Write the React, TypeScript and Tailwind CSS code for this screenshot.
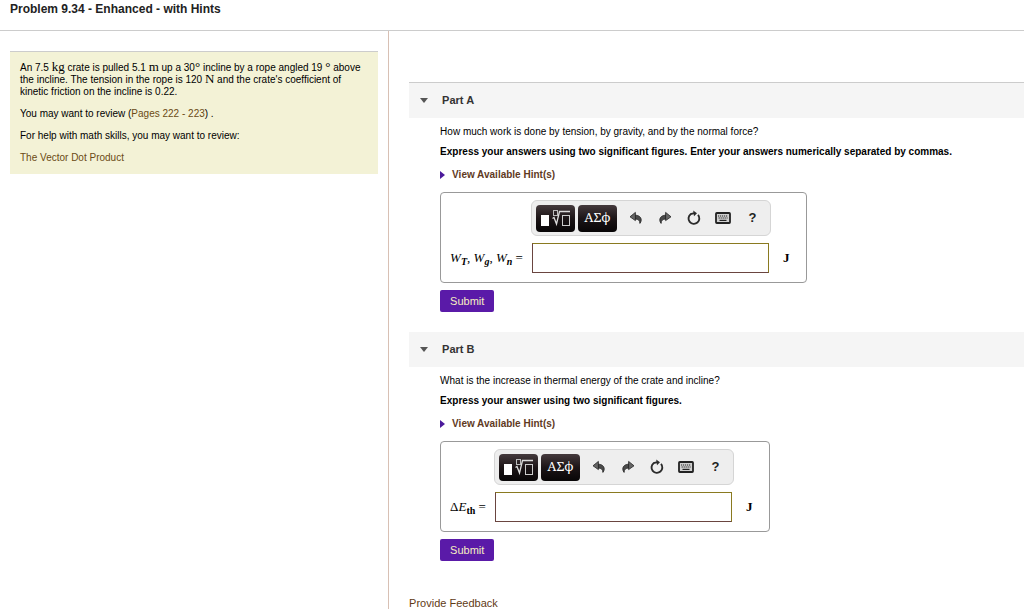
import type { ReactNode } from "react";

interface PartProps {
  id: string;
  title: string;
  bordered?: boolean;
  question: string;
  instructions: string;
  label: ReactNode;
}

function UndoIcon({ flipped = false }: { flipped?: boolean }) {
  return (
    <svg width="14" height="14" viewBox="0 0 14 14" aria-hidden="true">
      <g
        transform={flipped ? "translate(14 0) scale(-1 1)" : undefined}
        stroke="#222"
        strokeWidth="0.8"
        strokeLinejoin="round"
      >
        <path d="M6 4.2c3.9 0 6.2 2 6.2 4.8 0 1.3-.5 2.4-1.3 3.4 0-2.9-1.5-4.4-4.9-4.4z" fill="#4a4a4a" />
        <path d="M1 5.8 6.4 1.4v8.2z" fill="#666" />
      </g>
    </svg>
  );
}

function ResetIcon() {
  return (
    <svg width="16" height="16" viewBox="0 0 16 16" aria-hidden="true">
      <path d="M12 4.9A5.4 5.4 0 1 1 4.6 4.2L8.4 3.2" fill="none" stroke="#2b2b2b" strokeWidth="1.9" />
      <path d="M7.2.6 11 3.2 8 6.2z" fill="#2b2b2b" />
    </svg>
  );
}

function KeyboardIcon() {
  return (
    <svg width="16" height="12" viewBox="0 0 16 12" aria-hidden="true">
      <rect x="1" y="1" width="14" height="10" rx="0.8" fill="#d0d0d0" stroke="#222" strokeWidth="1.8" />
      <path d="M3 4h10M3.6 6h9" stroke="#222" strokeWidth="1.2" strokeDasharray="1.2 0.8" />
      <path d="M4.5 8.4h7" stroke="#222" strokeWidth="1.2" />
    </svg>
  );
}

function TemplatesIcon() {
  return (
    <svg width="31" height="18" viewBox="0 0 31 18" fill="none" aria-hidden="true">
      <rect x="1" y="6" width="8" height="11" fill="#fff" />
      <rect x="13.5" y="1.5" width="4" height="5" stroke="#bbb" />
      <path d="M12.5 9.5 14 8.5l2.5 6.5L19.5 2.5h10.5" stroke="#ddd" strokeWidth="1.3" />
      <rect x="22.5" y="6.5" width="7" height="10" stroke="#ccc" />
    </svg>
  );
}

function Toolbar() {
  const dark =
    "flex h-[27px] items-center justify-center rounded bg-linear-to-b from-[#453a3d] via-[#1c1517] to-[#080607] text-white";
  const plain = "flex h-7 w-[29px] items-center justify-center";

  return (
    <div className="flex h-9 w-60 items-center rounded-md border border-[#d5d5d5] bg-[#eeeeee] pl-1">
      <button type="button" aria-label="Templates" className={`${dark} w-[39px]`}>
        <TemplatesIcon />
      </button>
      <button
        type="button"
        aria-label="Symbols"
        className={`${dark} ml-[3px] w-[39px] font-['Noto_Serif','DejaVu_Serif',serif] text-[13px]`}
      >
        ΑΣϕ
      </button>
      <div className="ml-[5px] flex">
        <button type="button" aria-label="Undo" className={plain}>
          <UndoIcon />
        </button>
        <button type="button" aria-label="Redo" className={plain}>
          <UndoIcon flipped />
        </button>
        <button type="button" aria-label="Reset" className={plain}>
          <ResetIcon />
        </button>
        <button type="button" aria-label="Keyboard shortcuts" className={plain}>
          <KeyboardIcon />
        </button>
        <button type="button" aria-label="Help" className={`${plain} text-[13px] font-bold text-[#222]`}>
          ?
        </button>
      </div>
    </div>
  );
}

function Part({ id, title, bordered = false, question, instructions, label }: PartProps) {
  return (
    <section className="mb-5">
      <h2
        className={`flex items-center bg-[#f5f5f5] pl-[11px] text-[11px] font-bold text-[#333] ${bordered ? "h-9 border-t border-[#ccc]" : "h-[35px]"}`}
      >
        <button type="button" className="flex items-center gap-[14px]">
          <svg width="8" height="5" viewBox="0 0 8 5" aria-hidden="true">
            <path d="M0 0h8L4 5z" fill="#555" />
          </svg>
          {title}
        </button>
      </h2>
      <div className="pl-[31px]">
        <p className="mt-2 leading-3">{question}</p>
        <p className="mt-2 leading-3 font-bold">{instructions}</p>
        <a href={`#hints-${id}`} className="mt-[11px] flex items-center gap-[7px] leading-3 font-bold text-[#5f3a1e]">
          <svg width="5" height="8" viewBox="0 0 5 8" aria-hidden="true">
            <path d="M0 0v8l5-4z" fill="#4b1a9b" />
          </svg>
          View Available Hint(s)
        </a>
        <form onSubmit={(event) => event.preventDefault()}>
          <div className="mt-[11px] flex w-fit rounded border border-[#999] pt-[7px] pr-[17px] pb-[9px] pl-[9px]">
            <label htmlFor={`answer-${id}`} className="mr-2 flex h-[30px] items-center self-end whitespace-nowrap">
              {label}
            </label>
            <div>
              <Toolbar />
              <input
                id={`answer-${id}`}
                type="text"
                className="mt-[7px] ml-px block h-[30px] w-[237px] border border-t-[#8a7a20] border-r-[#8a7a20] border-b-[#6a4540] border-l-[#6a4540] bg-white px-2 text-sm outline-none"
              />
            </div>
            <span className="ml-3 flex h-[30px] items-center self-end font-['Liberation_Serif',serif] text-[13px] font-bold">
              J
            </span>
          </div>
          <button type="submit" className="mt-[7px] h-[22px] rounded-xs bg-[#5a1aa8] px-[10px] text-[11px] text-[#f7eec0]">
            Submit
          </button>
        </form>
      </div>
    </section>
  );
}

const math = "font-['Liberation_Serif',serif] text-[13px]";
const sub = "relative top-[3px] text-[10px] font-bold";
// short line height keeps the larger serif units from stretching the 12px lines
const unit = "font-['Liberation_Serif',serif] text-[13px] leading-2";

export default function App() {
  return (
    <div className="flex min-h-screen flex-col bg-white font-['Liberation_Sans',Arial,sans-serif] text-[10px] text-black">
      <header className="h-[31px] border-b border-[#ccc] pt-px pl-[10px]">
        <h1 className="text-[12px] leading-4 font-bold text-[#222]">Problem 9.34 - Enhanced - with Hints</h1>
      </header>
      <div className="flex flex-1">
        <aside className="w-[38%] shrink-0 border-r border-[#d8c0b4] pt-5 pr-[10px] pl-[10px]">
          <div className="space-y-[10px] border-t border-[#ccc] bg-[#f3f2d6] px-[10px] pt-[10px] pb-[10px] leading-3">
            <p>
              An 7.5 <span className={unit}>kg</span> crate is pulled 5.1 <span className={unit}>m</span> up a 30
              <span className={unit}>°</span> incline by a rope angled 19 <span className={unit}>°</span> above the
              incline. The tension in the rope is 120 <span className={unit}>N</span> and the crate's coefficient of
              kinetic friction on the incline is 0.22.
            </p>
            <p>
              You may want to review (<a href="#pages" className="text-[#6b4a14]">Pages 222 - 223</a>) .
            </p>
            <p>For help with math skills, you may want to review:</p>
            <p>
              <a href="#vector-dot-product" className="text-[#6b4a14]">The Vector Dot Product</a>
            </p>
          </div>
        </aside>
        <main className="min-w-0 flex-1 pt-[51px] pl-5">
          <Part
            id="a"
            title="Part A"
            bordered
            question="How much work is done by tension, by gravity, and by the normal force?"
            instructions="Express your answers using two significant figures. Enter your answers numerically separated by commas."
            label={
              <span className={math}>
                <i>W</i>
                <i className={sub}>T</i>, <i>W</i>
                <i className={sub}>g</i>, <i>W</i>
                <i className={sub}>n</i> =
              </span>
            }
          />
          <Part
            id="b"
            title="Part B"
            question="What is the increase in thermal energy of the crate and incline?"
            instructions="Express your answer using two significant figures."
            label={
              <span className={math}>
                Δ<i>E</i>
                <span className={sub}>th</span> =
              </span>
            }
          />
          <a href="#feedback" className="mt-[37px] block text-[11px] leading-[11px] text-[#5f3a14]">
            Provide Feedback
          </a>
        </main>
      </div>
    </div>
  );
}
